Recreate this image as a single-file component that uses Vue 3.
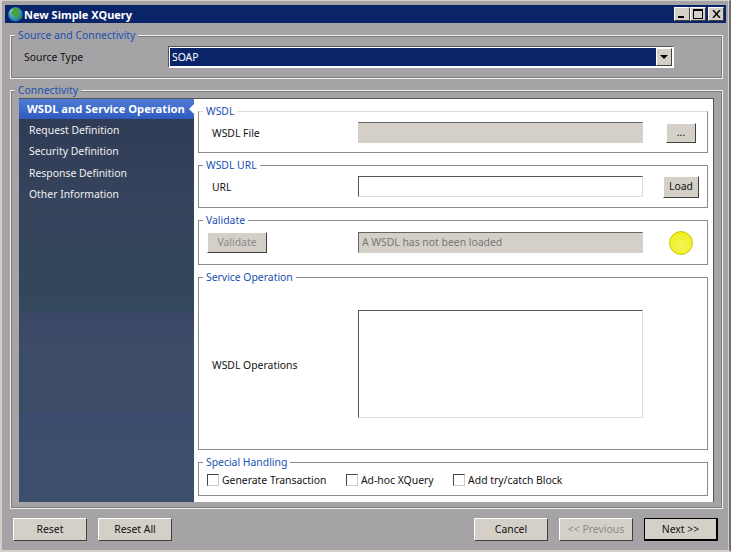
<template>
  <div class="window">
    <div class="titlebar">
      <svg class="globe" width="15" height="15" viewBox="0 0 15 15">
        <defs>
          <radialGradient id="sea" cx="0.35" cy="0.3" r="0.8">
            <stop offset="0" stop-color="#a8dcf2" />
            <stop offset="0.55" stop-color="#2f8fd0" />
            <stop offset="1" stop-color="#135a9e" />
          </radialGradient>
        </defs>
        <circle cx="7.5" cy="7.5" r="7.2" fill="url(#sea)" />
        <path d="M5 1.2 C7 0.4 10 0.8 11.5 2.2 L10.5 4.2 L12 6.2 L10 9.5 L8 13 L6.3 12 L6.6 9 L4 8 L2.6 5.6 L4.4 4 Z" fill="#45a23a" />
        <path d="M12.5 8.6 L14 8 L13.4 11 L11.6 12.6 L11.2 10.4 Z" fill="#3d9636" />
        <path d="M0.8 6 L2 7.6 L2 9.6 L0.9 8.8 Z" fill="#3d9636" />
      </svg>
      <span class="title">New Simple XQuery</span>
      <div class="winbtns">
        <button class="winbtn"><i class="min"></i></button>
        <button class="winbtn"><i class="max"></i></button>
        <button class="winbtn close">
          <svg width="9" height="8" viewBox="0 0 9 8"><path d="M1 0 L8 8 M8 0 L1 8" stroke="#000" stroke-width="1.4" /></svg>
        </button>
      </div>
    </div>

    <div class="body">
      <div class="etched source">
        <span class="legend">Source and Connectivity</span>
        <label class="src-label">Source Type</label>
        <div class="combo">
          <div class="combo-value">SOAP</div>
          <div class="combo-arrow"><i></i></div>
        </div>
      </div>

      <div class="etched connectivity">
        <span class="legend">Connectivity</span>
        <div class="panel">
          <ul class="nav">
            <li v-for="(item, i) in navItems" :key="item" :class="{ active: i === 0 }">{{ item }}</li>
          </ul>
          <div class="content">
            <div class="group g-wsdl">
              <span class="legend">WSDL</span>
              <span class="lbl">WSDL File</span>
              <div class="field disabled"></div>
              <button class="btn small browse">...</button>
            </div>
            <div class="group g-url">
              <span class="legend">WSDL URL</span>
              <span class="lbl">URL</span>
              <div class="field"></div>
              <button class="btn small load">Load</button>
            </div>
            <div class="group g-validate">
              <span class="legend">Validate</span>
              <button class="btn small validate" disabled>Validate</button>
              <div class="field disabled msg">A WSDL has not been loaded</div>
              <div class="lamp"></div>
            </div>
            <div class="group g-service">
              <span class="legend">Service Operation</span>
              <span class="lbl">WSDL Operations</span>
              <div class="field listbox"></div>
            </div>
            <div class="group g-special">
              <span class="legend">Special Handling</span>
              <label v-for="c in checks" :key="c" class="check"><i></i>{{ c }}</label>
            </div>
          </div>
        </div>
      </div>

      <div class="footer">
        <button class="btn">Reset</button>
        <button class="btn">Reset All</button>
        <div class="spacer"></div>
        <button class="btn">Cancel</button>
        <button class="btn" disabled>&lt;&lt; Previous</button>
        <button class="btn primary">Next &gt;&gt;</button>
      </div>
    </div>
  </div>
</template>

<script setup>
const navItems = [
  'WSDL and Service Operation',
  'Request Definition',
  'Security Definition',
  'Response Definition',
  'Other Information'
]
const checks = ['Generate Transaction', 'Ad-hoc XQuery', 'Add try/catch Block']
</script>

<style>
html, body {
  margin: 0;
  background: #a5a3a5;
}
</style>

<style scoped>
.window {
  width: 731px;
  height: 552px;
  box-sizing: border-box;
  background: #a5a3a5;
  border-top: 1px solid #d4d0c8;
  border-left: 2px solid #d4d0c8;
  border-right: 2px solid #6f6d6f;
  border-bottom: 2px solid #d4d0c8;
  box-shadow: inset -1px 0 #d4d0c8;
  padding: 4px 3px 0 3px;
  font-family: "Noto Sans", sans-serif;
  font-size: 10.4px;
  color: #111;
  overflow: hidden;
}

.titlebar {
  height: 18px;
  background: #0a246a;
  display: flex;
  align-items: center;
  padding: 0 2px 0 3px;
  color: #fff;
}
.globe { margin-right: 1px; }
.title { font-weight: 700; font-size: 11px; }
.winbtns { margin-left: auto; display: flex; }
.winbtn {
  width: 16px;
  height: 14px;
  padding: 0;
  background: #d4d0c8;
  border: 1px solid;
  border-color: #fff #404040 #404040 #fff;
  position: relative;
  display: flex;
  align-items: center;
  justify-content: center;
}
.winbtn.close { margin-left: 2px; }
.winbtn .min { width: 6px; height: 2px; background: #000; align-self: flex-end; margin-bottom: 2px; margin-right: 3px; }
.winbtn .max { width: 8px; height: 7px; border: 1px solid #000; border-top-width: 2px; }

.body {
  padding: 0 3px 0 5px;
}

.etched {
  position: relative;
  box-sizing: border-box;
  border: 1px solid #f2f2f2;
  outline: 1px solid #7d7b7d;
  outline-offset: -2px;
}
.legend {
  position: absolute;
  top: -8px;
  left: 4px;
  padding: 0 3px;
  background: #a5a3a5;
  color: #1a50b0;
  line-height: 14px;
  white-space: nowrap;
}

.source {
  height: 44px;
  margin-top: 12px;
  display: flex;
  align-items: center;
  padding-left: 13px;
}
.src-label { width: 144px; }
.combo {
  width: 506px;
  height: 22px;
  box-sizing: border-box;
  display: flex;
  border: 1px solid;
  border-color: #555 #fff #fff #555;
  padding: 1px;
  background: #fff;
}
.combo-value {
  flex: 1;
  background: #0a246a;
  color: #fff;
  padding-left: 2px;
  line-height: 18px;
}
.combo-arrow {
  width: 16px;
  background: #d4d0c8;
  box-sizing: border-box;
  border: 1px solid;
  border-color: #fff #404040 #404040 #fff;
  display: flex;
  align-items: center;
  justify-content: center;
}
.combo-arrow i {
  width: 0;
  height: 0;
  border: 4px solid transparent;
  border-top-color: #000;
  border-bottom: 0;
}

.connectivity {
  height: 419px;
  margin-top: 11px;
  padding: 7px 8px 6px 8px;
}
.panel {
  height: 100%;
  box-sizing: border-box;
  display: flex;
  border-top: 1px solid #555;
  border-right: 1px solid #555;
}
.nav {
  width: 175px;
  margin: 0;
  padding: 0;
  list-style: none;
  /* the bands come from the source image, so hard stops rather than a smooth fade */
  background: linear-gradient(
    #2f3a55,
    #36435c 25%,
    #32485c 53%,
    #3d4767 53%,
    #3c4c66 63%,
    #3c4c66 78%,
    #3b4a6d 78%,
    #3b4e6d 84%
  );
  color: #f0f0f0;
}
.nav li {
  height: 21.4px;
  line-height: 21px;
  padding-left: 10px;
}
.nav li.active {
  position: relative;
  height: 20px;
  line-height: 20px;
  margin-bottom: 1px;
  padding-left: 8px;
  font-size: 11.2px;
  font-weight: 700;
  color: #fff;
  background: linear-gradient(#4f7bd8, #2f5bbd);
}
.nav li.active::after {
  content: "";
  position: absolute;
  right: 0;
  top: 5px;
  border: 5px solid transparent;
  border-left: 0;
  border-right-color: #fff;
}

.content {
  flex: 1;
  background: #fff;
  padding: 12px 5px 6px 4px;
  display: flex;
  flex-direction: column;
  gap: 12px;
}

.group {
  position: relative;
  box-sizing: border-box;
  border: 1px solid #8a8a8a;
  display: flex;
  align-items: center;
}
.group .legend { background: #fff; }
.g-wsdl { height: 42px; border-top-color: #ddd; padding-top: 1px; }
.g-url { height: 43px; }
.g-validate { height: 45px; }
.g-service { height: 173px; }
.g-service .lbl { padding-top: 2px; }
.g-special { height: 34px; padding: 2px 0 0 8px; gap: 19.5px; }

.lbl {
  width: 146px;
  padding-left: 13px;
}
.field {
  width: 285px;
  height: 21px;
  box-sizing: border-box;
  background: #fff;
  border: 1px solid;
  border-color: #555 #ddd #ddd #555;
}
.field.disabled {
  background: #d4d0c8;
  color: #777;
  border-color: #666 #d4d0c8 #d4d0c8 #666;
}
.g-wsdl .field.disabled {
  border-left-color: #d4d0c8;
}
.msg {
  line-height: 19px;
  padding-left: 3px;
}
.listbox { height: 108px; }

.btn {
  width: 74px;
  height: 23px;
  padding: 0 0 1px;
  font: inherit;
  color: #111;
  background: #d4d0c8;
  border: 1px solid;
  border-color: #fff #404040 #404040 #fff;
}
.btn:disabled {
  color: #8a8a8a;
}
.btn.primary {
  border-color: #000;
  border-right-width: 2px;
  border-bottom-width: 2px;
}
.btn.small {
  height: 22px;
}
.browse {
  width: 30px;
  margin-left: 23px;
}
.btn.small.browse {
  height: 20px;
}
.load {
  width: 36px;
  margin-left: 20px;
}
.validate {
  width: 60px;
  margin: 0 91px 0 8px;
}
.btn.small.validate {
  height: 21px;
}
.lamp {
  width: 24px;
  height: 24px;
  margin-left: 26px;
  box-sizing: border-box;
  border-radius: 50%;
  border: 1px solid #c8c810;
  background: radial-gradient(circle at 50% 60%, #f4f45e, #efef24 65%, #e0e00c);
}

.check {
  display: flex;
  align-items: center;
  white-space: nowrap;
}
.check i {
  width: 12px;
  height: 12px;
  box-sizing: border-box;
  margin-right: 3px;
  border: 1px solid;
  border-color: #444 #ccc #ccc #444;
  background: #fff;
}

.footer {
  display: flex;
  gap: 11px;
  margin-top: 9px;
  padding: 0 5px 0 3px;
}
.spacer { flex: 1; }
</style>
